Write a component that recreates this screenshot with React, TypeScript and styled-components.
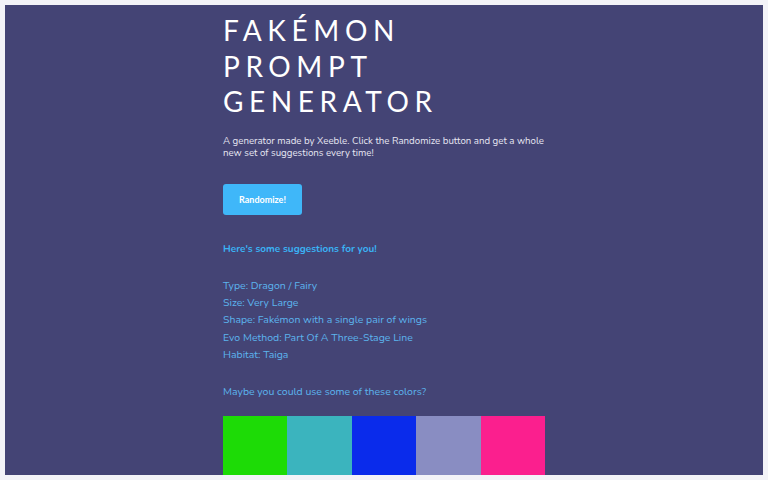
import React from "react";
import styled, { createGlobalStyle } from "styled-components";

const GlobalStyle = createGlobalStyle`
  html, body {
    margin: 0;
    padding: 0;
    background: #f3f3f8;
  }
  body {
    font-family: "Nunito", Lato, "Noto Sans", sans-serif;
  }
`;

const Frame = styled.div`
  padding: 5px;
  height: 480px;
  box-sizing: border-box;
`;

const Panel = styled.main`
  background: #444475;
  height: 470px;
  overflow: hidden;
  padding-left: 218px;
  box-sizing: border-box;
`;

const Column = styled.div`
  width: 324px;
  display: flex;
  flex-direction: column;
`;

const Title = styled.h1`
  margin: 8px 0 0;
  color: #ffffff;
  font-family: Lato, "Noto Sans", sans-serif;
  font-weight: 400;
  font-size: 28px;
  line-height: 35.5px;
  letter-spacing: 5.6px;
`;

const Intro = styled.p`
  margin: 15px 0 0;
  color: #e6e6f2;
  font-size: 9.7px;
  line-height: 12.5px;
`;

const Button = styled.button`
  margin-top: 24px;
  align-self: flex-start;
  width: 79px;
  height: 31px;
  border: none;
  border-radius: 3px;
  background: #3fb7f9;
  color: #ffffff;
  font-family: Lato, "Noto Sans", sans-serif;
  font-weight: 700;
  font-size: 9px;
  cursor: pointer;
`;

const Heading = styled.p`
  margin: 28px 0 0;
  color: #3ab2f4;
  font-weight: 700;
  font-size: 10px;
  line-height: 13px;
`;

const Traits = styled.ul`
  list-style: none;
  margin: 21px 0 0;
  padding: 0;
`;

const Trait = styled.li`
  color: #5cb4ee;
  font-size: 10.5px;
  line-height: 17.4px;
`;

const Hint = styled.p`
  margin: 21px 0 0;
  color: #5cb4ee;
  font-size: 10.5px;
  line-height: 13px;
`;

const Palette = styled.div`
  margin-top: 18px;
  width: 322px;
  display: grid;
  grid-template-columns: repeat(5, 1fr);
  height: 64px;
`;

const Swatch = styled.div<{ $color: string }>`
  background: ${(p) => p.$color};
`;

const traits = [
  "Type: Dragon / Fairy",
  "Size: Very Large",
  "Shape: Fakémon with a single pair of wings",
  "Evo Method: Part Of A Three-Stage Line",
  "Habitat: Taiga",
];

const colors = ["#1ddb06", "#3bb4be", "#0a2beb", "#898dc2", "#fb1f8e"];

export default function App() {
  return (
    <>
      <GlobalStyle />
      <Frame>
        <Panel>
          <Column>
            <Title>
              FAKÉMON
              <br />
              PROMPT
              <br />
              GENERATOR
            </Title>
            <Intro>
              A generator made by Xeeble. Click the Randomize button and get a
              whole new set of suggestions every time!
            </Intro>
            <Button>Randomize!</Button>
            <Heading>Here's some suggestions for you!</Heading>
            <Traits>
              {traits.map((t) => (
                <Trait key={t}>{t}</Trait>
              ))}
            </Traits>
            <Hint>Maybe you could use some of these colors?</Hint>
            <Palette>
              {colors.map((c) => (
                <Swatch key={c} $color={c} />
              ))}
            </Palette>
          </Column>
        </Panel>
      </Frame>
    </>
  );
}
